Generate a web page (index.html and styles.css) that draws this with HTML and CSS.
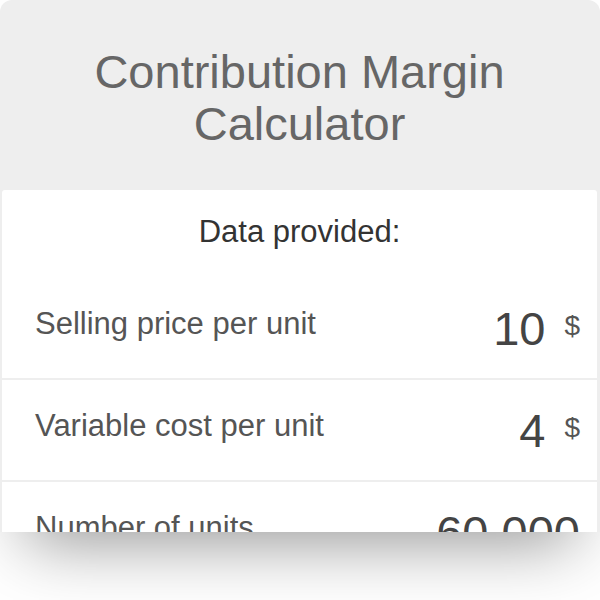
FILE: index.html
```html
<!DOCTYPE html>
<html lang="en">
<head>
<meta charset="utf-8">
<title>Contribution Margin Calculator</title>
<link rel="stylesheet" href="styles.css">
</head>
<body>
<div class="card">
  <header class="header">
    <h1 class="title">Contribution Margin<br>Calculator</h1>
  </header>
  <section class="block first">
    <div class="heading">Data provided:</div>
    <div class="row">
      <span class="label">Selling price per unit</span>
      <span class="value">10</span>
      <span class="unit">$</span>
    </div>
  </section>
  <section class="block">
    <div class="row">
      <span class="label">Variable cost per unit</span>
      <span class="value">4</span>
      <span class="unit">$</span>
    </div>
  </section>
  <section class="block">
    <div class="row">
      <span class="label">Number of units</span>
      <span class="value">60,000</span>
    </div>
  </section>
</div>
</body>
</html>
```
FILE: styles.css
```css
html, body {
  margin: 0;
  padding: 0;
  background: #ffffff;
}

body {
  width: 600px;
  height: 600px;
  overflow: hidden;
  font-family: "Liberation Sans", Arial, sans-serif;
}

.card {
  box-sizing: border-box;
  width: 600px;
  height: 532px;
  background: #eeeeee;
  border-radius: 12px 12px 0 0;
  overflow: hidden;
  padding: 0 3px 0 2px;
  box-shadow: 0 36px 64px -26px rgba(0, 0, 0, 0.42);
}

.header {
  box-sizing: border-box;
  height: 190px;
  padding-top: 46px;
  text-align: center;
}

.title {
  margin: 0;
  font-size: 47px;
  font-weight: normal;
  line-height: 52px;
  color: #666666;
}

.block {
  background: #ffffff;
  margin-bottom: 2px;
}

.block.first {
  border-radius: 3px 3px 0 0;
}

.heading {
  box-sizing: border-box;
  height: 88px;
  padding-top: 24px;
  text-align: center;
  font-size: 31px;
  color: #333333;
}

.row {
  box-sizing: border-box;
  height: 100px;
  display: flex;
  align-items: center;
  padding: 0 17px 8px 33px;
}

.label {
  flex: 1;
  font-size: 31px;
  color: #555555;
}

.value {
  margin-top: 8px;
  font-size: 47px;
  color: #444444;
}

.unit {
  margin: 4px 0 0 19px;
  font-size: 28px;
  color: #555555;
}
```
